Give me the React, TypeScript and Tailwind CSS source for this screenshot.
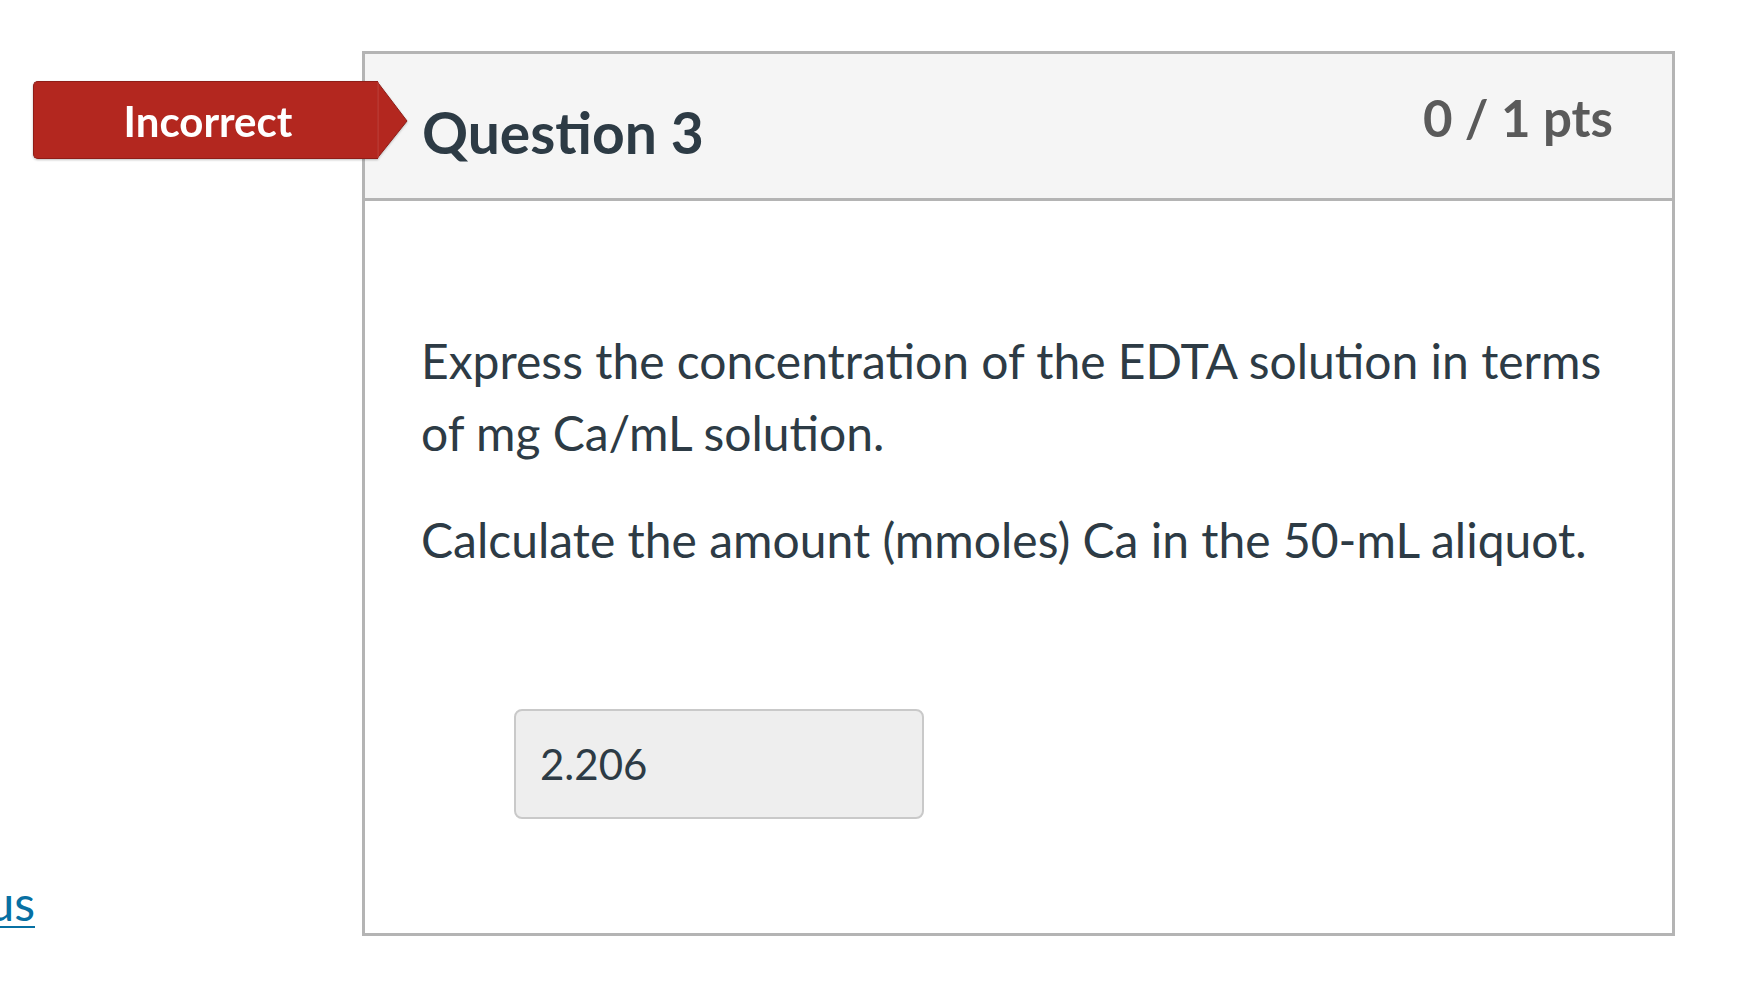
import React from "react";

// Canvas quiz result: one incorrect question card

function IncorrectBadge() {
  return (
    <div className="flex items-stretch h-[78px] drop-shadow-[0_1px_1px_rgba(0,0,0,0.25)]">
      <div className="w-[345px] flex items-center justify-center pl-[4px] rounded-l-[5px] bg-[#b3271f] border border-r-0 border-[#8f1d17]">
        <span className="text-[42px] font-bold text-white leading-none pt-[2px]">Incorrect</span>
      </div>
      <svg width="31" height="78" viewBox="0 0 31 78" className="block -ml-px">
        <polygon points="0,0.5 30,40 0,77.5" fill="#b3271f" stroke="#8f1d17" strokeWidth="1" />
        <line x1="1" y1="1" x2="1" y2="77" stroke="#c4453d" strokeWidth="1" />
      </svg>
    </div>
  );
}

export default function App() {
  return (
    <div className="w-[1747px] h-[1002px] bg-white overflow-hidden font-['Lato','Noto_Sans',sans-serif] text-[#2d3b45]">
      <div className="flex pt-[51px]">
        {/* left rail: status badge + nav link */}
        <div className="w-[362px] shrink-0 flex flex-col relative">
          <div className="absolute left-[33px] top-[30px] z-10">
            <IncorrectBadge />
          </div>
          <div className="mt-auto mb-[-3px] w-[35px] overflow-hidden flex justify-end">
            <a href="#" className="whitespace-nowrap text-[48px] leading-[72px] text-[#0770a3] underline decoration-2 underline-offset-[5px]">
              Previous
            </a>
          </div>
        </div>

        {/* question card */}
        <div className="w-[1313px] h-[885px] shrink-0 border-[3px] border-[#b4b4b4] flex flex-col">
          <div className="h-[147px] shrink-0 bg-[#f5f5f5] border-b-[3px] border-[#b4b4b4] flex justify-between px-[57px]">
            <h2 className="mt-[44px] text-[57px] leading-[68px] font-bold text-[#2d3b45]">Question 3</h2>
            <div className="mt-[33px] mr-[2px] text-[51px] leading-[62px] font-bold text-[#5a5a5a]">0 / 1 pts</div>
          </div>

          <div className="flex-1 pl-[56px] pt-[124px]">
            <div className="w-[1200px] text-[48px] leading-[72px]">
              <p>Express the concentration of the EDTA solution in terms of mg Ca/mL solution.</p>
              <p className="mt-[35px]">Calculate the amount (mmoles) Ca in the 50-mL aliquot.</p>
            </div>

            <div className="mt-[133px] ml-[93px] w-[410px] h-[110px] bg-[#eeeeee] border-2 border-[#c9c9c9] rounded-[8px] flex items-center px-[24px]">
              <span className="text-[42px] leading-none">2.206</span>
            </div>
          </div>
        </div>
      </div>
    </div>
  );
}
